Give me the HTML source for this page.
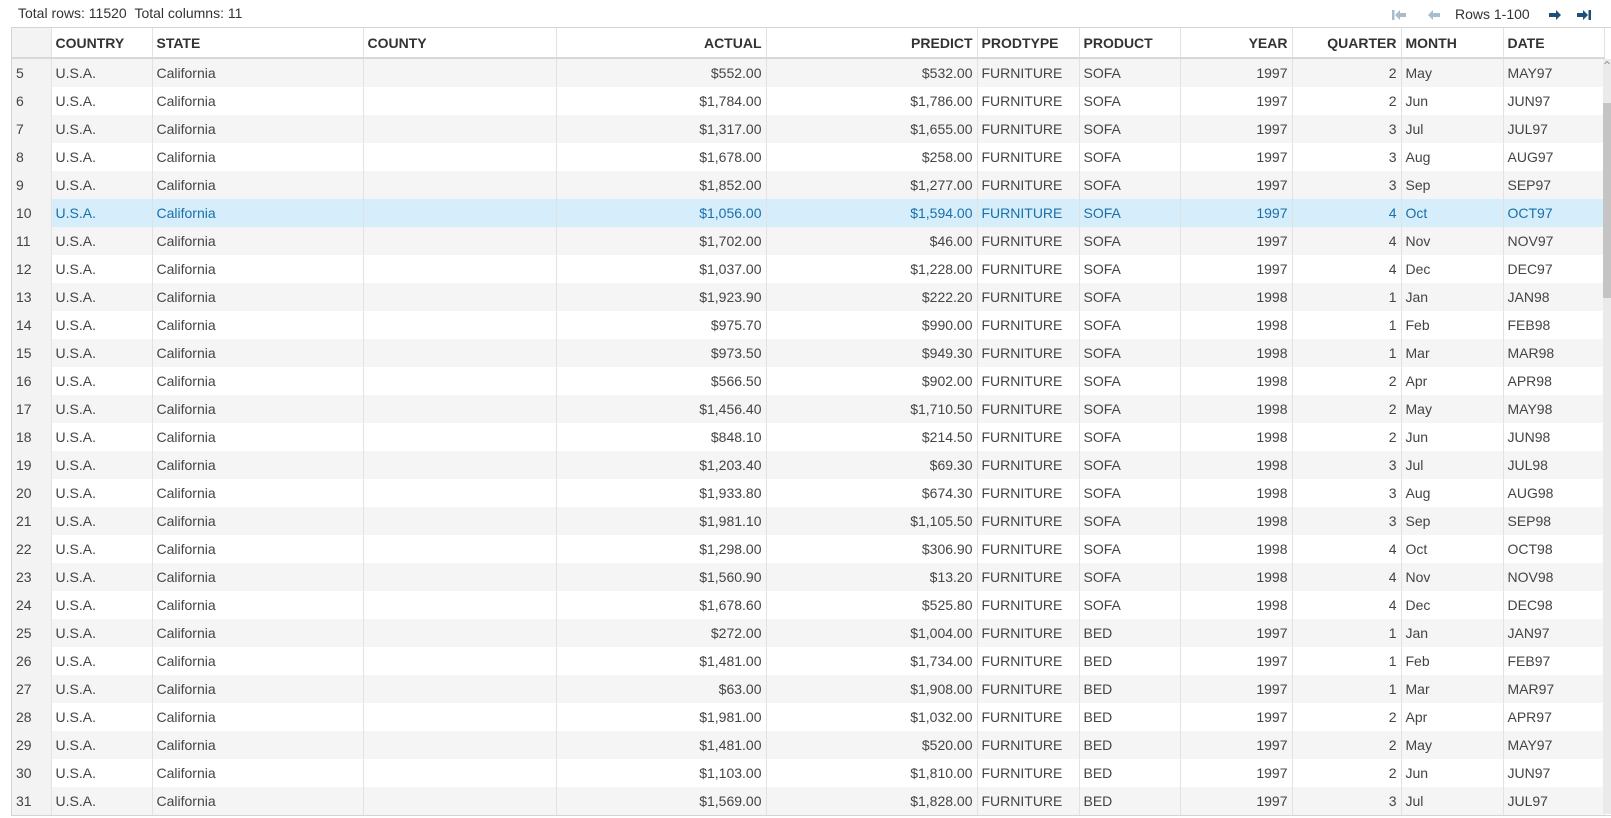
<!DOCTYPE html>
<html><head><meta charset="utf-8"><style>
body{margin:0;width:1611px;height:818px;overflow:hidden;background:#fff;font-family:"Liberation Sans",sans-serif;color:#444;position:relative}
#top{position:absolute;left:18px;top:5px;font-size:14px;color:#333}
#nav{position:absolute;right:0;top:5px;width:320px;height:20px;font-size:14px;color:#333}
#grid{position:absolute;left:11px;top:27px;width:1600px;height:787px;border:1px solid #d4d4d4;border-right:none;overflow:hidden}
table{border-collapse:collapse;table-layout:fixed;font-size:14px}
th{height:29px;font-weight:bold;color:#333;text-align:left;padding:0 4px;border-right:1px solid #e2e2e2;border-bottom:2px solid #d8d8d8;white-space:nowrap;overflow:hidden}
td{height:28px;padding:0 4px;border-right:1px solid #e2e2e2;white-space:nowrap;overflow:hidden}
.r{text-align:right}
tr.o td{background:#f5f5f5}
tr.sel td{background:#d6eefb;color:#1a6fa8}
td.i{background:#f3f3f3!important;color:#444!important}
#sb{position:absolute;left:1603px;top:59px;width:8px;height:755px;background:#eaeaea}
#th{position:absolute;left:1603px;top:103px;width:8px;height:195px;background:#c4c4c4}
</style></head><body>
<div id="top">Total rows: 11520&nbsp;&nbsp;Total columns: 11</div>
<div id="nav">
<svg style="position:absolute;left:101px;top:4px" width="14" height="12"><rect x="0" y="1" width="2.5" height="10" fill="#a9bccb"/><path d="M3 6 L8 1 L8 4 L14 4 L14 8 L8 8 L8 11Z" fill="#a9bccb"/></svg>
<svg style="position:absolute;left:137px;top:4px" width="13" height="12"><path d="M0 6 L5 1 L5 4 L12 4 L12 8 L5 8 L5 11Z" fill="#a9bccb"/></svg>
<span style="position:absolute;left:164px;top:1px">Rows 1-100</span>
<svg style="position:absolute;left:257px;top:4px" width="13" height="12"><path d="M13 6 L8 1 L8 4 L1 4 L1 8 L8 8 L8 11Z" fill="#1d4f7a"/></svg>
<svg style="position:absolute;left:286px;top:4px" width="15" height="12"><path d="M11 6 L6 1 L6 4 L0 4 L0 8 L6 8 L6 11Z" fill="#1d4f7a"/><rect x="11.5" y="1" width="2.5" height="10" fill="#1d4f7a"/></svg>
</div>
<div id="grid"><table>
<colgroup><col style="width:39px"><col style="width:101px"><col style="width:211px"><col style="width:193px"><col style="width:210px"><col style="width:211px"><col style="width:102px"><col style="width:101px"><col style="width:112px"><col style="width:109px"><col style="width:102px"><col style="width:101px"></colgroup>
<tr><th style="background:#f3f3f3"></th><th>COUNTRY</th><th>STATE</th><th>COUNTY</th><th class="r">ACTUAL</th><th class="r">PREDICT</th><th>PRODTYPE</th><th>PRODUCT</th><th class="r">YEAR</th><th class="r">QUARTER</th><th>MONTH</th><th>DATE</th></tr>
<tbody id="b"></tbody></table></div>
<div id="sb"></div><div id="th"></div>
<svg style="position:absolute;left:1603px;top:60px" width="8" height="6"><path d="M1.5 4 L4 1.5 L6.5 4" stroke="#999" fill="none"/></svg>
<script>
var d=[[5,"$552.00","$532.00","SOFA",1997,2,"May","MAY97"],[6,"$1,784.00","$1,786.00","SOFA",1997,2,"Jun","JUN97"],[7,"$1,317.00","$1,655.00","SOFA",1997,3,"Jul","JUL97"],[8,"$1,678.00","$258.00","SOFA",1997,3,"Aug","AUG97"],[9,"$1,852.00","$1,277.00","SOFA",1997,3,"Sep","SEP97"],[10,"$1,056.00","$1,594.00","SOFA",1997,4,"Oct","OCT97"],[11,"$1,702.00","$46.00","SOFA",1997,4,"Nov","NOV97"],[12,"$1,037.00","$1,228.00","SOFA",1997,4,"Dec","DEC97"],[13,"$1,923.90","$222.20","SOFA",1998,1,"Jan","JAN98"],[14,"$975.70","$990.00","SOFA",1998,1,"Feb","FEB98"],[15,"$973.50","$949.30","SOFA",1998,1,"Mar","MAR98"],[16,"$566.50","$902.00","SOFA",1998,2,"Apr","APR98"],[17,"$1,456.40","$1,710.50","SOFA",1998,2,"May","MAY98"],[18,"$848.10","$214.50","SOFA",1998,2,"Jun","JUN98"],[19,"$1,203.40","$69.30","SOFA",1998,3,"Jul","JUL98"],[20,"$1,933.80","$674.30","SOFA",1998,3,"Aug","AUG98"],[21,"$1,981.10","$1,105.50","SOFA",1998,3,"Sep","SEP98"],[22,"$1,298.00","$306.90","SOFA",1998,4,"Oct","OCT98"],[23,"$1,560.90","$13.20","SOFA",1998,4,"Nov","NOV98"],[24,"$1,678.60","$525.80","SOFA",1998,4,"Dec","DEC98"],[25,"$272.00","$1,004.00","BED",1997,1,"Jan","JAN97"],[26,"$1,481.00","$1,734.00","BED",1997,1,"Feb","FEB97"],[27,"$63.00","$1,908.00","BED",1997,1,"Mar","MAR97"],[28,"$1,981.00","$1,032.00","BED",1997,2,"Apr","APR97"],[29,"$1,481.00","$520.00","BED",1997,2,"May","MAY97"],[30,"$1,103.00","$1,810.00","BED",1997,2,"Jun","JUN97"],[31,"$1,569.00","$1,828.00","BED",1997,3,"Jul","JUL97"]];
var h="";d.forEach(function(r){var c=r[0]==10?"sel":(r[0]%2?"o":"");h+='<tr class="'+c+'"><td class="i">'+r[0]+'</td><td>U.S.A.</td><td>California</td><td></td><td class="r">'+r[1]+'</td><td class="r">'+r[2]+'</td><td>FURNITURE</td><td>'+r[3]+'</td><td class="r">'+r[4]+'</td><td class="r">'+r[5]+'</td><td>'+r[6]+'</td><td>'+r[7]+'</td></tr>';});
document.getElementById("b").innerHTML=h;
</script>
</body></html>
